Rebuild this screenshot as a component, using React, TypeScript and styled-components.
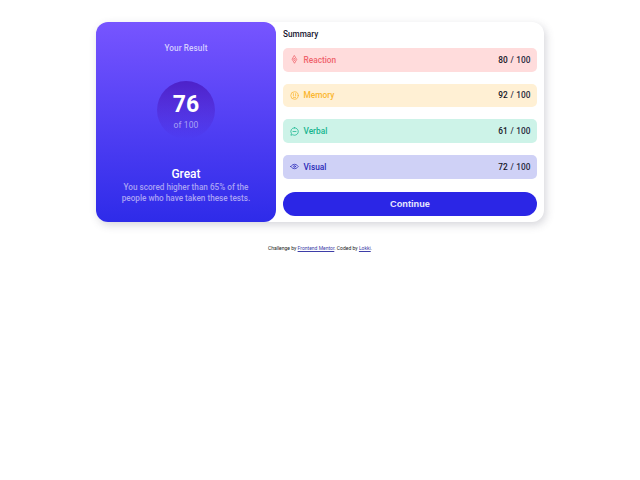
import React from "react";
import styled, { createGlobalStyle } from "styled-components";

const Global = createGlobalStyle`
  html, body { margin: 0; padding: 0; background: #ffffff; }
  body { font-family: "Roboto", "Liberation Sans", sans-serif; }
`;

const Page = styled.div`
  width: 640px;
  height: 480px;
  padding-top: 22px;
  box-sizing: border-box;
  display: flex;
  flex-direction: column;
  align-items: center;
`;

const Card = styled.main`
  width: 448px;
  height: 200px;
  display: flex;
  background: #fff;
  border-radius: 12px;
  box-shadow: 2px 3px 8px rgba(70, 70, 90, 0.22);
`;

const ResultPanel = styled.section`
  width: 180px;
  box-sizing: border-box;
  padding-top: 20px;
  display: flex;
  flex-direction: column;
  align-items: center;
  border-radius: 12px;
  background: linear-gradient(180deg, #7755ff 0%, #2e2be9 100%);
`;

const ResultTitle = styled.h1`
  margin: 0;
  font-size: 8.200px;
  line-height: 12px;
  font-weight: 500;
  letter-spacing: 0.1px;
  color: #d5ceff;
`;

const Circle = styled.div`
  width: 58px;
  height: 58px;
  margin-top: 27px;
  border-radius: 50%;
  display: flex;
  flex-direction: column;
  align-items: center;
  background: linear-gradient(180deg, #4d21c9 0%, rgba(37, 33, 201, 0) 100%);
`;

const Score = styled.div`
  margin-top: 9px;
  font-size: 23px;
  line-height: 30px;
  font-weight: 700;
  color: #fff;
`;

const OutOf = styled.div`
  font-size: 8.500px;
  line-height: 10px;
  font-weight: 400;
  letter-spacing: 0.1px;
  color: #a9a2f5;
`;

const Verdict = styled.h2`
  margin: 27px 0 0;
  font-size: 12px;
  line-height: 16px;
  font-weight: 500;
  color: #fff;
`;

const Description = styled.p`
  margin: 0;
  width: 150px;
  font-size: 8.200px;
  line-height: 10.600px;
  font-weight: 500;
  text-align: center;
  color: #a9a2f5;
`;

const SummaryPanel = styled.section`
  flex: 1;
  box-sizing: border-box;
  padding: 6px 7px;
  display: flex;
  flex-direction: column;
`;

const SummaryTitle = styled.h2`
  margin: 0 0 7px;
  font-size: 8.200px;
  line-height: 13px;
  font-weight: 500;
  color: #161630;
`;

const Rows = styled.div`
  display: flex;
  flex-direction: column;
  gap: 12.200px;
`;

const Row = styled.div<{ $bg: string; $fg: string }>`
  height: 23.500px;
  box-sizing: border-box;
  padding: 0 6.500px 0 7px;
  display: flex;
  align-items: center;
  border-radius: 5px;
  background: ${(p) => p.$bg};
  color: ${(p) => p.$fg};
`;

const RowIcon = styled.svg`
  width: 9px;
  height: 9px;
  margin-right: 4.500px;
  flex: none;
  fill: none;
  stroke: currentColor;
  stroke-width: 1;
  stroke-linecap: round;
  stroke-linejoin: round;
`;

const RowLabel = styled.span`
  flex: 1;
  font-size: 8.300px;
  font-weight: 500;
`;

const RowScore = styled.span`
  font-size: 8.300px;
  font-weight: 500;
  word-spacing: 0.600px;
  color: #141425;
`;

const ScoreMax = styled.span`
  font-weight: 500;
  color: #2a2a40;
`;

const ContinueButton = styled.button`
  height: 24px;
  margin-top: 13.700px;
  padding-top: 1px;
  border: 0;
  border-radius: 12px;
  background: #2b26e6;
  color: #e8e8ff;
  font-family: "Liberation Sans", Arial, sans-serif;
  font-size: 9.200px;
  font-weight: 700;
`;

const Attribution = styled.footer`
  margin-top: 22.500px;
  font-size: 5px;
  line-height: 7px;
  font-weight: 400;
  color: #222;
`;

const AttributionLink = styled.a`
  color: #3e3ea8;
  text-decoration: underline;
`;

const data = [
  { label: "Reaction", score: 80, bg: "#ffdcdc", fg: "#f0646c", icon: <path d="M6 1 9 6 6 11 3 6ZM6 4.500 7 6 6 7.500 5 6Z" /> },
  { label: "Memory", score: 92, bg: "#fff0d4", fg: "#fbb62e", icon: <><circle cx="6" cy="6" r="5" /><path d="M4.500 3.500v3M7.500 3.500v3M4.500 8.500h3" /></> },
  { label: "Verbal", score: 61, bg: "#cdf3e8", fg: "#16b58f", icon: <><path d="M6 1a5 5 0 1 1-2.500 9.300L1.200 11l.700-2.300A5 5 0 0 1 6 1Z" /><path d="M4 6h4" /></> },
  { label: "Visual", score: 72, bg: "#cfd1f6", fg: "#2a2ab8", icon: <><path d="M1 6s2-3 5-3 5 3 5 3-2 3-5 3-5-3-5-3Z" /><circle cx="6" cy="6" r="1.200" /></> },
];

export default function App() {
  return (
    <Page>
      <Global />
      <Card>
        <ResultPanel>
          <ResultTitle>Your Result</ResultTitle>
          <Circle>
            <Score>76</Score>
            <OutOf>of 100</OutOf>
          </Circle>
          <Verdict>Great</Verdict>
          <Description>You scored higher than 65% of the people who have taken these tests.</Description>
        </ResultPanel>
        <SummaryPanel>
          <SummaryTitle>Summary</SummaryTitle>
          <Rows>
            {data.map((d) => (
              <Row key={d.label} $bg={d.bg} $fg={d.fg}>
                <RowIcon viewBox="0 0 12 12">{d.icon}</RowIcon>
                <RowLabel>{d.label}</RowLabel>
                <RowScore>{d.score} <ScoreMax>/ 100</ScoreMax></RowScore>
              </Row>
            ))}
          </Rows>
          <ContinueButton>Continue</ContinueButton>
        </SummaryPanel>
      </Card>
      <Attribution>
        Challenge by <AttributionLink href="#">Frontend Mentor</AttributionLink>. Coded by <AttributionLink href="#">Lokki</AttributionLink>.
      </Attribution>
    </Page>
  );
}
